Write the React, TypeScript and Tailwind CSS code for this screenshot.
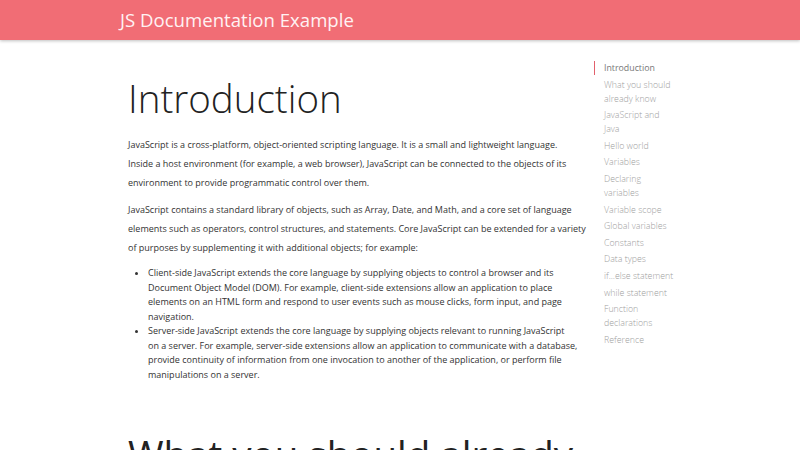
const TOC = [
  { label: 'Introduction', active: true },
  { label: 'What you should already know' },
  { label: 'JavaScript and Java' },
  { label: 'Hello world' },
  { label: 'Variables' },
  { label: 'Declaring variables' },
  { label: 'Variable scope' },
  { label: 'Global variables' },
  { label: 'Constants' },
  { label: 'Data types' },
  { label: 'if...else statement' },
  { label: 'while statement' },
  { label: 'Function declarations' },
  { label: 'Reference' },
]

const PARA_1 = [
  'JavaScript is a cross-platform, object-oriented scripting language. It is a small and lightweight language.',
  'Inside a host environment (for example, a web browser), JavaScript can be connected to the objects of its',
  'environment to provide programmatic control over them.',
]

const PARA_2 = [
  'JavaScript contains a standard library of objects, such as Array, Date, and Math, and a core set of language',
  'elements such as operators, control structures, and statements. Core JavaScript can be extended for a variety',
  'of purposes by supplementing it with additional objects; for example:',
]

const BULLETS = [
  [
    'Client-side JavaScript extends the core language by supplying objects to control a browser and its',
    'Document Object Model (DOM). For example, client-side extensions allow an application to place',
    'elements on an HTML form and respond to user events such as mouse clicks, form input, and page',
    'navigation.',
  ],
  [
    'Server-side JavaScript extends the core language by supplying objects relevant to running JavaScript',
    'on a server. For example, server-side extensions allow an application to communicate with a database,',
    'provide continuity of information from one invocation to another of the application, or perform file',
    'manipulations on a server.',
  ],
]

function Lines({ lines }: { lines: string[] }) {
  return (
    <>
      {lines.map(line => (
        <span key={line} className="block whitespace-nowrap">{line}</span>
      ))}
    </>
  )
}

export default function App() {
  return (
    <div
      className="w-[800px] h-[450px] overflow-hidden bg-white"
      style={{ fontFamily: '"Open Sans", "Noto Sans", sans-serif' }}
    >
      {/* Header */}
      <header className="relative z-10 h-[40px] bg-[#f16d75] flex items-center pl-[120px] shadow-[0_1px_3px_rgba(0,0,0,0.25)]">
        <span className="text-[18.6px] leading-none text-[#fff2f3]">JS Documentation Example</span>
      </header>

      <div className="flex pl-[128px]">
        {/* Main */}
        <main className="w-[456px] shrink-0 text-[#333] text-[9px]">
          <h1 className="mt-[35px] text-[38.5px] leading-[47px] font-light text-[#222]">Introduction</h1>
          <p className="mt-[13px] leading-[19px]">
            <Lines lines={PARA_1} />
          </p>
          <p className="mt-[8px] leading-[19px]">
            <Lines lines={PARA_2} />
          </p>
          <ul className="mt-[9px] pl-[20px] list-disc leading-[14.5px]">
            {BULLETS.map(item => (
              <li key={item[0]}>
                <Lines lines={item} />
              </li>
            ))}
          </ul>
          <h2 className="mt-[49px] text-[38.5px] leading-[47px] font-normal text-[#222] whitespace-nowrap">
            What you should already
            <br />
            know
          </h2>
        </main>

        {/* Table of contents */}
        <nav className="ml-[10px] mt-[21px] w-[82px] flex flex-col gap-[2.6px] text-[8.8px] leading-[14px] font-light">
          {TOC.map(item => (
            <div
              key={item.label}
              className={
                item.active
                  ? 'border-l-[1.5px] border-[#e2606c] pl-[9px] text-[#777] font-normal'
                  : 'border-l-[1.5px] border-transparent pl-[9px] text-[#a0a0a0]'
              }
            >
              {item.label}
            </div>
          ))}
        </nav>
      </div>
    </div>
  )
}
